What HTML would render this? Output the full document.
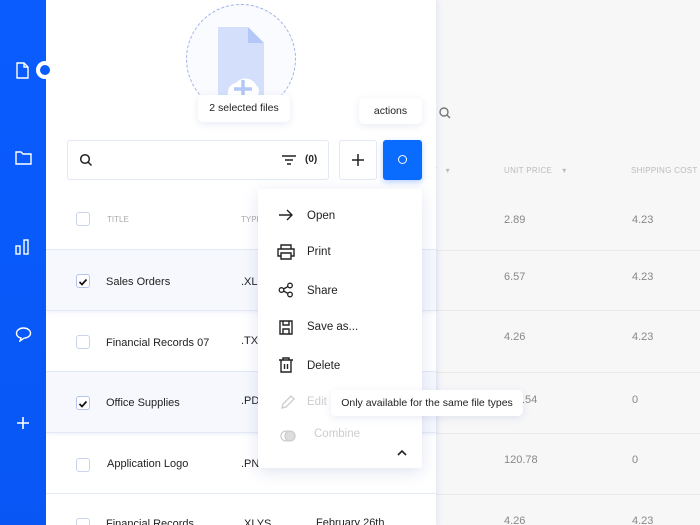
<!DOCTYPE html>
<html style="height:525px;overflow:hidden"><head><style>
*{margin:0;padding:0;box-sizing:border-box}
body{width:700px;height:525px;overflow:hidden;background:#f7f7f8;font-family:"Liberation Sans",sans-serif;position:relative}
.abs{position:absolute}
.side{left:0;top:0;width:46px;height:525px;background:linear-gradient(#0a5cff,#0857f5)}
.main{left:46px;top:0;width:390px;height:525px;background:#fff;box-shadow:2px 0 6px rgba(120,140,220,.15)}
.row{position:absolute;left:46px;width:390px;height:61px;border-top:1px solid #e3e8f5}
.sel{background:#f6f8fd;box-shadow:0 2px 4px rgba(100,130,220,.12)}
.cb{position:absolute;left:30px;width:14px;height:14px;border:1.3px solid #c9d3ee;border-radius:3px;background:#fff}
.t{position:absolute;font-size:11px;color:#222}
.g{position:absolute;font-size:11px;color:#888}
.menu{left:258px;top:189px;width:164px;height:279px;background:#fff;border-radius:3px;box-shadow:0 4px 16px rgba(90,110,180,.18)}
.mi{position:absolute;left:49px;font-size:11.5px;color:#222}
.tip{background:#fff;border-radius:5px;box-shadow:0 2px 8px rgba(100,120,180,.15);font-size:10.5px;color:#222;text-align:center}
</style></head><body>
<div class="abs" style="left:0;top:0;width:700px;height:525px;overflow:hidden">
<svg class="abs" style="left:438px;top:106px" width="14" height="14"><circle cx="6" cy="6" r="4" fill="none" stroke="#777" stroke-width="1.4"/><path d="M9 9l3 3" stroke="#777" stroke-width="1.4"/></svg>
<div class="g" style="left:432px;top:166px;font-size:8px;color:#bbb">T &nbsp;&nbsp;&nbsp;▾</div>
<div class="g" style="left:504px;top:166px;font-size:8px;color:#bbb;letter-spacing:.3px">UNIT PRICE &nbsp;&nbsp;&nbsp;▾</div>
<div class="g" style="left:631px;top:166px;font-size:8px;color:#bbb;letter-spacing:.3px;white-space:nowrap">SHIPPING COST</div>
<div class="abs" style="left:436px;top:250px;width:264px;border-top:1px solid #eaeaea"></div>
<div class="abs" style="left:436px;top:310px;width:264px;border-top:1px solid #eaeaea"></div>
<div class="abs" style="left:436px;top:372px;width:264px;border-top:1px solid #eaeaea"></div>
<div class="abs" style="left:436px;top:433px;width:264px;border-top:1px solid #eaeaea"></div>
<div class="abs" style="left:436px;top:494px;width:264px;border-top:1px solid #eaeaea"></div>
<div class="g" style="left:504px;top:214px">2.89</div><div class="g" style="left:632px;top:214px">4.23</div>
<div class="g" style="left:504px;top:271px">6.57</div><div class="g" style="left:632px;top:271px">4.23</div>
<div class="g" style="left:504px;top:331px">4.26</div><div class="g" style="left:632px;top:331px">4.23</div>
<div class="g" style="left:522px;top:394px">.54</div><div class="g" style="left:632px;top:394px">0</div>
<div class="g" style="left:504px;top:454px">120.78</div><div class="g" style="left:632px;top:454px">0</div>
<div class="g" style="left:504px;top:515px">4.26</div><div class="g" style="left:632px;top:515px">4.23</div>

<div class="abs main"></div>
<div class="abs side"></div>
<svg class="abs" style="left:16px;top:62px" width="14" height="17" fill="none" stroke="#fff" stroke-width="1.4"><path d="M1 1h7l4 4v11H1z M8 1v4h4"/></svg>
<div class="abs" style="left:36px;top:61px;width:18px;height:18px;border-radius:50%;background:#fff"></div>
<div class="abs" style="left:40px;top:65px;width:10px;height:10px;border-radius:50%;background:#0a5cff"></div>
<svg class="abs" style="left:15px;top:151px" width="17" height="14" fill="none" stroke="#fff" stroke-width="1.4"><path d="M1 1h5l2 2h8v10H1z"/></svg>
<svg class="abs" style="left:15px;top:239px" width="16" height="16" fill="none" stroke="#fff" stroke-width="1.4"><rect x="1" y="7" width="4" height="8"/><rect x="9" y="1" width="4" height="14"/></svg>
<svg class="abs" style="left:15px;top:327px" width="17" height="15" fill="none" stroke="#fff" stroke-width="1.4"><path d="M8.5 1C4.5 1 1.5 3.3 1.5 6.3c0 2.6 2.2 4.3 4.5 4.8L5 14l4-2.8c3.8-.3 6.5-2.3 6.5-5C15.5 3.3 12.5 1 8.5 1z"/></svg>
<svg class="abs" style="left:16px;top:416px" width="14" height="14" stroke="#fff" stroke-width="1.6"><path d="M7 1v12M1 7h12"/></svg>
<div class="abs" style="left:186px;top:4px;width:110px;height:110px;border-radius:50%;border:1.3px dashed #9fb2ea;background:#fafbff"></div>
<svg class="abs" style="left:216px;top:25px" width="52" height="75"><path d="M2 2h30l16 16v70H2z" fill="#d4e0fb"/><path d="M32 2l16 16H32z" fill="#b3c8f6"/><path d="M12 70a10 10 0 0 1 8-12a12 12 0 0 1 20 2a8 8 0 0 1 2 10z" fill="#fff"/><path d="M27 55v18M18 64h18" stroke="#b3c8f6" stroke-width="3.5"/></svg>
<div class="abs tip" style="left:198px;top:95px;width:92px;height:27px;line-height:27px">2 selected files</div>
<div class="abs tip" style="left:359px;top:98px;width:63px;height:26px;line-height:26px">actions</div>
<div class="abs" style="left:67px;top:140px;width:262px;height:40px;border:1px solid #e3e8f5;border-radius:3px;background:#fff"></div>
<svg class="abs" style="left:79px;top:153px" width="14" height="14" fill="none" stroke="#222" stroke-width="1.5"><circle cx="6" cy="6" r="4.3"/><path d="M9 9l3.5 3.5"/></svg>
<svg class="abs" style="left:281px;top:154px" width="16" height="12" stroke="#222" stroke-width="1.6"><path d="M1 2h14M4 6h8M6 10h4"/></svg>
<div class="abs" style="left:305px;top:154px;font-size:10px;color:#222;font-weight:bold">(0)</div>
<div class="abs" style="left:339px;top:140px;width:38px;height:40px;border:1px solid #e3e8f5;border-radius:3px;background:#fff"></div>
<svg class="abs" style="left:352px;top:154px" width="12" height="12" stroke="#222" stroke-width="1.5"><path d="M6 0v12M0 6h12"/></svg>
<div class="abs" style="left:383px;top:140px;width:39px;height:40px;border-radius:3px;background:#0a6cff;box-shadow:0 2px 6px rgba(10,100,255,.3)"></div>
<div class="abs" style="left:398px;top:155px;width:9px;height:9px;border-radius:50%;border:1.8px solid #fff"></div>
<div class="cb" style="left:76px;top:212px"></div>
<div class="abs" style="left:107px;top:215px;font-size:8px;color:#aaa">TITLE</div>
<div class="abs" style="left:241px;top:215px;font-size:8px;color:#aaa">TYPE</div>
<div class="row sel" style="top:249px"><div class="cb" style="top:24px;border-color:#b5c4ea"><svg width="12" height="12"><path d="M2.5 6l2.5 2.5L9.5 3.5" fill="none" stroke="#111" stroke-width="1.7"/></svg></div><div class="t" style="left:60px;top:26px">Sales Orders</div><div class="t" style="left:195px;top:26px">.XLS</div></div>
<div class="row" style="top:310px"><div class="cb" style="top:24px"></div><div class="t" style="left:60px;top:26px">Financial Records 07</div><div class="t" style="left:195px;top:24px">.TXT</div></div>
<div class="row sel" style="top:371px"><div class="cb" style="top:24px;border-color:#b5c4ea"><svg width="12" height="12"><path d="M2.5 6l2.5 2.5L9.5 3.5" fill="none" stroke="#111" stroke-width="1.7"/></svg></div><div class="t" style="left:60px;top:25px">Office Supplies</div><div class="t" style="left:195px;top:23px">.PD</div></div>
<div class="row" style="top:432px"><div class="cb" style="top:25px"></div><div class="t" style="left:61px;top:25px">Application Logo</div><div class="t" style="left:195px;top:25px">.PN</div></div>
<div class="row" style="top:493px;height:32px"><div class="cb" style="top:24px"></div><div class="t" style="left:60px;top:24px">Financial Records</div><div class="t" style="left:195px;top:24px">.XLYS</div><div class="t" style="left:270px;top:23px">February 26th</div></div>
<div class="abs menu">
<svg class="abs" style="left:20px;top:20px" width="16" height="12" fill="none" stroke="#222" stroke-width="1.4"><path d="M1 6h13M9 1l5 5-5 5"/></svg><div class="mi" style="top:21px">Open</div>
<svg class="abs" style="left:19px;top:55px" width="18" height="16" fill="none" stroke="#222" stroke-width="1.4"><path d="M4 5V1h10v4M4 12H1V5h16v7h-3M4 9h10v6H4z"/></svg><div class="mi" style="top:57px">Print</div>
<svg class="abs" style="left:20px;top:93px" width="16" height="16" fill="none" stroke="#222" stroke-width="1.3"><circle cx="3.5" cy="8" r="2.3"/><circle cx="12" cy="3.5" r="2.3"/><circle cx="12" cy="12.5" r="2.3"/><path d="M5.5 7l4.5-2.5M5.5 9l4.5 2.5"/></svg><div class="mi" style="top:96px">Share</div>
<svg class="abs" style="left:21px;top:131px" width="14" height="15" fill="none" stroke="#222" stroke-width="1.4"><path d="M1 1h12v13H1zM4 1v4h6V1M4 14V9h6v5"/></svg><div class="mi" style="top:132px">Save as...</div>
<svg class="abs" style="left:21px;top:168px" width="14" height="16" fill="none" stroke="#222" stroke-width="1.4"><path d="M0 3h14M4 3V1h6v2M2 3v12h10V3M5.5 7v5M8.5 7v5"/></svg><div class="mi" style="top:171px">Delete</div>
<svg class="abs" style="left:23px;top:206px" width="14" height="14" fill="none" stroke="#ccc" stroke-width="1.3"><path d="M1 13l1-4 8-8 3 3-8 8z"/></svg><div class="mi" style="top:207px;color:#ccc">Edit</div>
<svg class="abs" style="left:22px;top:239px" width="16" height="16" fill="none" stroke="#ccc" stroke-width="1.3"><circle cx="6" cy="8" r="5"/><circle cx="10" cy="8" r="5" fill="#ddd"/></svg><div class="mi" style="top:239px;color:#ccc;left:56px">Combine</div>
<svg class="abs" style="left:139px;top:260px" width="10" height="7" fill="none" stroke="#222" stroke-width="1.6"><path d="M1 6l4-4 4 4"/></svg>
</div>
<div class="abs tip" style="left:331px;top:390px;width:192px;height:26px;line-height:26px;font-size:10.5px">Only available for the same file types</div>
</div>
</body></html>
